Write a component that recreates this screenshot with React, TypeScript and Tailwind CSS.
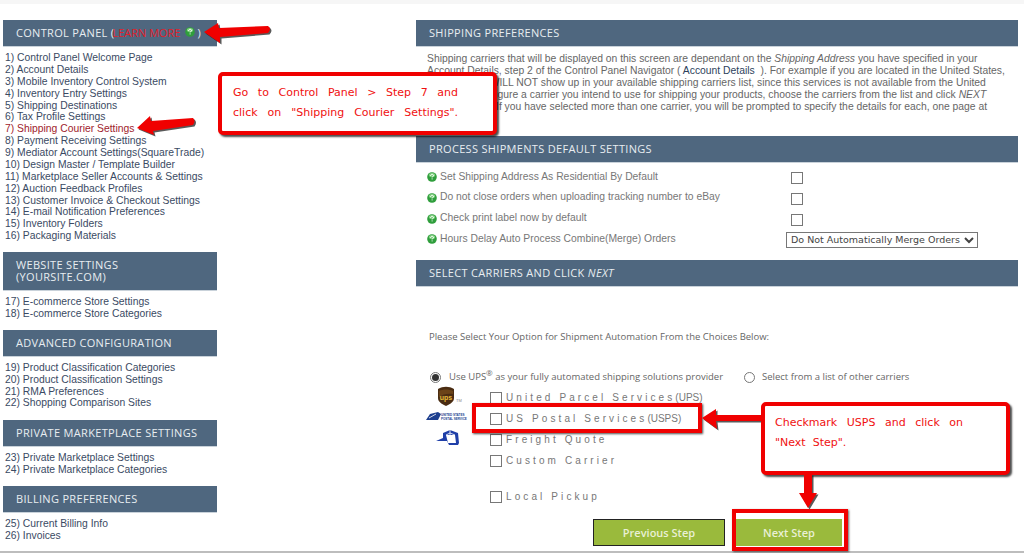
// Shipping preferences screen with red tutorial annotations on top.

const sans = "font-['Liberation_Sans',Arial,sans-serif]";

type Section = { title: React.ReactNode; items: string[]; first: number; gap: string; tall?: boolean };

const sections: Section[] = [
  {
    title: (
      <>
        CONTROL PANEL (<span className="-ml-[2px] tracking-normal text-[#e0202c]">LEARN MORE</span>
        <HelpDot className="ml-[5px] mr-[2px] inline-block align-[0px]" />)
      </>
    ),
    first: 1,
    gap: "mb-[10px]",
    items: [
      "Control Panel Welcome Page",
      "Account Details",
      "Mobile Inventory Control System",
      "Inventory Entry Settings",
      "Shipping Destinations",
      "Tax Profile Settings",
      "Shipping Courier Settings",
      "Payment Receiving Settings",
      "Mediator Account Settings(SquareTrade)",
      "Design Master / Template Builder",
      "Marketplace Seller Accounts & Settings",
      "Auction Feedback Profiles",
      "Customer Invoice & Checkout Settings",
      "E-mail Notification Preferences",
      "Inventory Folders",
      "Packaging Materials",
    ],
  },
  {
    title: (
      <>
        WEBSITE SETTINGS
        <br />
        (YOURSITE.COM)
      </>
    ),
    first: 17,
    gap: "mb-[10px]",
    tall: true,
    items: ["E-commerce Store Settings", "E-commerce Store Categories"],
  },
  {
    title: "ADVANCED CONFIGURATION",
    first: 19,
    gap: "mb-[11px]",
    items: [
      "Product Classification Categories",
      "Product Classification Settings",
      "RMA Preferences",
      "Shopping Comparison Sites",
    ],
  },
  {
    title: "PRIVATE MARKETPLACE SETTINGS",
    first: 23,
    gap: "mb-[10px]",
    items: ["Private Marketplace Settings", "Private Marketplace Categories"],
  },
  {
    title: "BILLING PREFERENCES",
    first: 25,
    gap: "mb-0",
    items: ["Current Billing Info", "Invoices"],
  },
];

function HelpDot({ className = "" }: { className?: string }) {
  return (
    <svg width="10" height="10" viewBox="0 0 10 10" className={className}>
      <circle cx="5" cy="5" r="4.8" fill="#2f9e3c" />
      <ellipse cx="5" cy="3" rx="3.2" ry="2" fill="#7fd07f" />
      <path d="M3.6 3.8c0-2 2.9-1.8 2.9-.3 0 1-1.4 1-1.4 2" fill="none" stroke="#fff" strokeWidth="1" />
      <rect x="4.6" y="6.4" width="1" height="1" fill="#fff" />
    </svg>
  );
}

function Bar({ children, tall }: { children: React.ReactNode; tall?: boolean }) {
  return (
    <div
      className={`flex items-center bg-[#4f677f] border-b border-[#c9d2da] pl-[13px] font-['Open_Sans',sans-serif] text-[11px] font-medium tracking-[0.32px] text-[#e8edf1] ${
        tall ? "h-[39px] leading-[12px]" : "h-[27px]"
      }`}
    >
      <div>{children}</div>
    </div>
  );
}

function Box({ className = "" }: { className?: string }) {
  return <span className={`inline-block h-[12px] w-[12px] border border-[#777] bg-white ${className}`} />;
}

function Sidebar() {
  return (
    <div className="w-[214px] shrink-0">
      {sections.map((s) => (
        <div key={s.first} className={s.gap}>
          <Bar tall={s.tall}>{s.title}</Bar>
          <ul className={`mt-[5px] pl-[2px] text-[10.35px] leading-[11.87px] text-[#3a4a63] ${sans}`}>
            {s.items.map((item, i) => (
              <li key={item} className={s.first + i === 7 ? "text-[#a0222c]" : ""}>
                {s.first + i}) {item}
              </li>
            ))}
          </ul>
        </div>
      ))}
    </div>
  );
}

const defaults = [
  "Set Shipping Address As Residential By Default",
  "Do not close orders when uploading tracking number to eBay",
  "Check print label now by default",
];

const carriers = [
  { label: "United Parcel Services", tail: "(UPS)", mt: "mt-0" },
  { label: "US Postal Services", tail: "(USPS)", mt: "mt-[9px]" },
  { label: "Freight Quote", tail: "", mt: "mt-[9px]" },
  { label: "Custom Carrier", tail: "", mt: "mt-[8.5px]" },
  { label: "Local Pickup", tail: "", mt: "mt-[24px]" },
];

function CarrierLogos() {
  return (
    <div className="-mt-[2px] flex w-[47px] shrink-0 flex-col items-center">
      <svg width="26" height="20" viewBox="0 0 26 20" className="ml-[8px] overflow-visible">
        <path d="M1 3c5-3 11-3 16 0v9c0 4-4 6-8 8-4-2-8-4-8-8z" fill="#4a2c12" />
        <path d="M2 5c4-2 10-2 14 0v3C11 7 6 8 2 11z" fill="#6b4318" />
        <text x="9" y="14" fontSize="7" fontWeight="700" textAnchor="middle" fill="#e8b93a" className={sans}>
          ups
        </text>
        <text x="19" y="16" fontSize="4" fill="#888" className={sans}>
          TM
        </text>
      </svg>
      <svg width="42" height="10" viewBox="0 0 42 10" className="ml-[3px] mt-[5px]">
        <path d="M0 9l4-6 8-2 3 2-3 6z" fill="#1d3f8f" />
        <path d="M3 7l7-4" stroke="#fff" strokeWidth="0.8" />
        <text x="15" y="4.5" fontSize="3" fontWeight="700" fill="#1d3f8f" className={sans}>
          UNITED STATES
        </text>
        <text x="15" y="9" fontSize="3" fontWeight="700" fill="#1d3f8f" className={sans}>
          POSTAL SERVICE
        </text>
      </svg>
      <svg width="24" height="16" viewBox="0 0 24 16" className="ml-[4px] mt-[9px]">
        <path d="M7 3l7-3 8 3 1 10-1 2h-9l-2-4H0l7-3z" fill="#1f3fa8" />
        <path d="M10 5h9l1 8h-8z" fill="#fff" />
        <path d="M14 0v5M10 5l4-2 5 2" stroke="#fff" strokeWidth="0.8" fill="none" />
      </svg>
    </div>
  );
}

function Main() {
  return (
    <div className="ml-[199px] w-[602px] shrink-0">
      <Bar>SHIPPING PREFERENCES</Bar>
      <p className={`mt-[6px] h-[83px] pl-[11px] text-[10.35px] leading-[12px] text-[#666] ${sans}`}>
        Shipping carriers that will be displayed on this screen are dependant on the <i>Shipping Address</i> you have
        specified in your
        <br />
        Account Details, step 2 of the Control Panel Navigator ( <span className="text-[#2d3f5c]">Account Details</span>
        &nbsp; ). For example if you are located in the United States,
        <br />
        Canada Post WILL NOT show up in your available shipping carriers list, since this services is not available
        from the United
        <br />
        States. To configure a carrier you intend to use for shipping your products, choose the carriers from the list
        and click <i>NEXT</i>
        <br />
        when finished. If you have selected more than one carrier, you will be prompted to specify the details for each,
        one page at
        <br />a time.
      </p>

      <Bar>PROCESS SHIPMENTS DEFAULT SETTINGS</Bar>
      <div className={`h-[97px] pt-[3px] pl-[11px] text-[10.35px] text-[#777] ${sans}`}>
        {defaults.map((d) => (
          <div key={d} className="flex h-[20.7px] items-center">
            <HelpDot className="mt-[2px] mr-[3px] shrink-0" />
            <span className="w-[351px]">{d}</span>
            <Box className="mt-[4px]" />
          </div>
        ))}
        <div className="flex h-[20.7px] items-center">
          <HelpDot className="mt-[2px] mr-[3px] shrink-0" />
          <span className="w-[346px]">Hours Delay Auto Process Combine(Merge) Orders</span>
          <select className="mt-[3px] h-[16px] w-[192px] border border-[#777] bg-white font-['DejaVu_Sans',sans-serif] text-[9.5px] text-[#444]">
            <option>Do Not Automatically Merge Orders</option>
          </select>
        </div>
      </div>

      <Bar>
        SELECT CARRIERS AND CLICK <i>NEXT</i>
      </Bar>
      <div className={`pl-[13px] pt-[44px] font-['Open_Sans',sans-serif] text-[9.5px] leading-[12px] text-[#666]`}>
        Please Select Your Option for Shipment Automation From the Choices Below:
      </div>

      <div className="mt-[27px] flex items-center pl-[14px] font-['Open_Sans',sans-serif] text-[9.5px] text-[#666]">
        <span className="flex h-[11px] w-[11px] items-center justify-center rounded-full border border-[#777] bg-white">
          <span className="h-[7px] w-[7px] rounded-full bg-[#333]" />
        </span>
        <span className="ml-[8px] w-[295px]">
          Use UPS<sup className="text-[8px]">®</sup> as your fully automated shipping solutions provider
        </span>
        <span className="h-[11px] w-[11px] rounded-full border border-[#777] bg-white" />
        <span className="ml-[7px]">Select from a list of other carriers</span>
      </div>

      <div className="mt-[4px] flex pl-[6px]">
        <CarrierLogos />
        <div className={`ml-[21px] mt-[4px] text-[10px] leading-[12px] text-[#777] ${sans}`}>
          {carriers.map((c) => (
            <div key={c.label} className={`flex items-center ${c.mt}`}>
              <Box className="mr-[4px]" />
              <span className="tracking-[3.1px]">{c.label}</span>
              {c.tail && <span>{c.tail}</span>}
            </div>
          ))}
        </div>
      </div>

      <div className="mt-[16px] flex pl-[177px] font-['Open_Sans',sans-serif] text-[11px] font-semibold text-[#e9f0d5]">
        <button type="button" className="h-[27px] w-[132px] border border-[#222] bg-[#9aba3c] pt-[1px]">
          Previous Step
        </button>
        <button type="button" className="ml-[11px] h-[27px] w-[106px] bg-[#9aba3c] pt-[1px]">
          Next Step
        </button>
      </div>
    </div>
  );
}

function Callout({ className, children }: { className: string; children: React.ReactNode }) {
  return (
    <div
      className={`absolute rounded-[5px] border-[4px] border-[#f00000] bg-white text-[11px] leading-[20px] text-[#f01010] shadow-[2px_2px_2px_rgba(0,0,0,0.7)] font-['DejaVu_Sans',sans-serif] ${className}`}
    >
      {children}
    </div>
  );
}

// Hand-drawn style arrow, box is positioned over the page
function Arrow({ className, d, w, h }: { className: string; d: string; w: number; h: number }) {
  return (
    <svg width={w} height={h} viewBox={`0 0 ${w} ${h}`} className={`absolute overflow-visible ${className}`}>
      <path d={d} fill="#222" opacity="0.75" transform="translate(1.5 1.5)" />
      <path d={d} fill="#f00000" />
    </svg>
  );
}

function Annotations() {
  return (
    <>
      <Arrow className="left-[204px] top-[23px]" w={68} h={20} d="M0 9L14 0l1 5 49-2q4 3 0 7L16 14v6z" />
      <Arrow className="left-[137px] top-[115px]" w={58} h={20} d="M0 13L13 1l1 5 42-3q3 3 0 7L16 16l1 4z" />
      <Callout className="left-[218px] top-[72px] h-[63px] w-[279px] pl-[11px] pt-[7px]">
        <div className="w-[225px] [text-align-last:justify]">Go to Control Panel &gt; Step 7 and</div>
        <div className="w-[225px] [text-align-last:justify]">click on "Shipping Courier Settings".</div>
      </Callout>

      <div className="absolute left-[472px] top-[403px] h-[30px] w-[230px] border-[4px] border-[#f00000] shadow-[1px_1px_2px_rgba(0,0,0,0.7)]" />
      <Arrow className="left-[702px] top-[409px]" w={62} h={20} d="M0 9L14 0v6l48 0v6H14l1 8z" />
      <Callout className="left-[761px] top-[402px] h-[73px] w-[249px] pl-[10px] pt-[7px]">
        <div className="w-[188px] [text-align-last:justify]">Checkmark USPS and click on</div>
        <div>"Next&nbsp; Step".</div>
      </Callout>
      <Arrow className="left-[799px] top-[474px]" w={18} h={34} d="M5 0h8v19h5L9 34 0 19h5z" />
      <div className="absolute left-[732px] top-[509px] h-[42px] w-[116px] border-[4px] border-[#f00000] shadow-[1px_1px_2px_rgba(0,0,0,0.6)]" />
    </>
  );
}

export default function App() {
  return (
    <div className="relative h-[553px] w-[1024px] overflow-hidden bg-white">
      <div className="h-[4px] bg-[#f6f6f6]" />
      <div className="flex pl-[3px] pt-[16px]">
        <Sidebar />
        <Main />
      </div>
      <div className="absolute inset-x-0 bottom-0 h-[2px] bg-[#bdbdbd]" />
      <Annotations />
    </div>
  );
}
